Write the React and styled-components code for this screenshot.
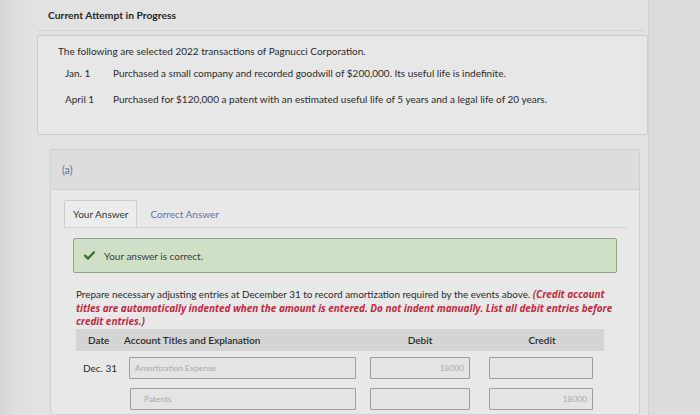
import React from "react";
import styled, { createGlobalStyle } from "styled-components";

const Global = createGlobalStyle`
  html, body { margin: 0; padding: 0; }
  body {
    background: #dcdcdc;
    font-family: Lato, "Open Sans", "Liberation Sans", sans-serif;
    overflow: hidden;
  }
`;

const Page = styled.div`
  width: 700px;
  height: 415px;
  display: flex;
  overflow: hidden;
  background: linear-gradient(90deg, #d6d6d6 0px, #dedede 14px, #e2e2e2 37px);
`;

const Sheet = styled.div`
  width: 611px;
  padding-left: 37px;
  display: flex;
  flex-direction: column;
`;

const Gutter = styled.div`
  flex: 1;
  background: #dcdcdc;
  border-left: 1px solid #d2d2d2;
`;

const Title = styled.div`
  padding: 9px 11px 9px;
  line-height: 12px;
  font-size: 10.3px;
  font-weight: 700;
  color: #262626;
  border-bottom: 1px solid #d3d3d3;
  margin-right: 3px;
`;

const InfoBox = styled.div`
  margin-top: 4px;
  height: 100px;
  box-sizing: border-box;
  border: 1px solid #cbcbcb;
  border-radius: 2px;
  background: #e7e7e7;
  padding: 9px 20px;
  font-size: 10px;
  line-height: 12px;
  color: #2a2a2a;
`;

const Lead = styled.div`
  margin-bottom: 10px;
`;

const TxRow = styled.div`
  display: flex;
  margin-left: 7px;
  margin-bottom: 14px;
`;

const TxDate = styled.span`
  width: 48px;
  flex-shrink: 0;
`;

const PartBox = styled.div`
  margin: 14px 8px 0 13px;
  border: 1px solid #d0d0d0;
  border-radius: 2px;
  background: #e8e8e8;
  flex: 1;
`;

const PartHead = styled.div`
  height: 39px;
  background: #dddddd;
  border-bottom: 1px solid #cfcfcf;
  display: flex;
  align-items: center;
  padding-left: 11px;
  font-size: 10.5px;
  color: #5a72a6;
`;

const PartBody = styled.div`
  padding: 10px 12px 0 12px;
`;

const Tabs = styled.div`
  display: flex;
  align-items: flex-end;
  gap: 4px;
  border-bottom: 1px solid #d2d2d2;
`;

const Tab = styled.div`
  height: 26px;
  display: flex;
  align-items: center;
  padding: 0 8px;
  font-size: 10px;
  color: ${(p) => (p.$active ? "#333" : "#5a74aa")};
  background: ${(p) => (p.$active ? "#ececec" : "transparent")};
  border: 1px solid ${(p) => (p.$active ? "#cdcdcd" : "transparent")};
  border-bottom: none;
  border-radius: 2px 2px 0 0;
  margin-left: ${(p) => (p.$active ? "1px" : "0")};
`;

const Success = styled.div`
  margin: 10px 10px 0 10px;
  height: 35px;
  box-sizing: border-box;
  border: 1px solid #8ea285;
  border-radius: 2px;
  background: #cfe0c6;
  display: flex;
  align-items: center;
  padding-left: 10px;
  gap: 9px;
  font-size: 10px;
  color: #3a3a3a;
`;

const Instructions = styled.p`
  margin: 15px 12px 0 13px;
  font-size: 9.9px;
  line-height: 13.5px;
  color: #2a2a2a;
`;

const Note = styled.span`
  font-family: "Open Sans", Lato, sans-serif;
  font-size: 10px;
  letter-spacing: -0.05px;
  color: #c42a40;
  font-weight: 700;
  font-style: italic;
`;

const Table = styled.div`
  margin: 0 23px 0 13px;
`;

const HeadRow = styled.div`
  display: grid;
  grid-template-columns: 48px 1fr 120px 124px;
  align-items: center;
  height: 22px;
  background: #d4d4d4;
  font-size: 10px;
  font-weight: 600;
  color: #2a2a2a;
`;

const HeadCell = styled.div`
  padding-left: ${(p) => (p.$pad ? "12px" : "0")};
  text-align: ${(p) => (p.$center ? "center" : "left")};
`;

const Row = styled.div`
  display: grid;
  grid-template-columns: 53px 227px 116px 118px;
  align-items: center;
  height: 22px;
  margin-top: ${(p) => p.$mt}px;
`;

const DateCell = styled.div`
  font-size: 10px;
  color: #2a2a2a;
  padding-left: 7px;
`;

const Field = styled.div`
  height: 22px;
  box-sizing: border-box;
  border: 1px solid #9e9e9e;
  border-radius: 1px;
  background: #e4e4e4;
  font-size: 8.4px;
  color: #a9a9a9;
  display: flex;
  align-items: center;
  justify-content: ${(p) => (p.$num ? "flex-end" : "flex-start")};
  padding: 0 ${(p) => (p.$num ? "5px" : "0")} 0 ${(p) => (p.$indent ? "13px" : "5px")};
  margin-left: ${(p) => p.$ml || 0}px;
  width: ${(p) => p.$w}px;
`;

function Check() {
  return (
    <svg width="11" height="9" viewBox="0 0 11 9">
      <path d="M1 4.6 L4 7.6 L10 1.2" fill="none" stroke="#3e6b33" strokeWidth="2.2" strokeLinecap="round" strokeLinejoin="round" />
    </svg>
  );
}

export default function App() {
  return (
    <>
      <Global />
      <Page>
        <Sheet>
          <Title>Current Attempt in Progress</Title>
          <InfoBox>
            <Lead>The following are selected 2022 transactions of Pagnucci Corporation.</Lead>
            <TxRow>
              <TxDate>Jan. 1</TxDate>
              <span>Purchased a small company and recorded goodwill of $200,000. Its useful life is indefinite.</span>
            </TxRow>
            <TxRow>
              <TxDate>April 1</TxDate>
              <span>Purchased for $120,000 a patent with an estimated useful life of 5 years and a legal life of 20 years.</span>
            </TxRow>
          </InfoBox>
          <PartBox>
            <PartHead>(a)</PartHead>
            <PartBody>
              <Tabs>
                <Tab $active>Your Answer</Tab>
                <Tab>Correct Answer</Tab>
              </Tabs>
              <Success>
                <Check />
                <span>Your answer is correct.</span>
              </Success>
              <Instructions>
                Prepare necessary adjusting entries at December 31 to record amortization required by the events above.{" "}
                <Note>
                  (Credit account titles are automatically indented when the amount is entered. Do not indent manually. List all debit entries before credit entries.)
                </Note>
              </Instructions>
              <Table>
                <HeadRow>
                  <HeadCell $pad>Date</HeadCell>
                  <HeadCell>Account Titles and Explanation</HeadCell>
                  <HeadCell $center>Debit</HeadCell>
                  <HeadCell $center>Credit</HeadCell>
                </HeadRow>
                <Row $mt={6}>
                  <DateCell>Dec. 31</DateCell>
                  <Field $w={227}>Amortization Expense</Field>
                  <Field $w={100} $ml={14} $num>18000</Field>
                  <Field $w={104} $ml={17} $num></Field>
                </Row>
                <Row $mt={9}>
                  <DateCell></DateCell>
                  <Field $w={226} $ml={1} $indent>Patents</Field>
                  <Field $w={100} $ml={14} $num></Field>
                  <Field $w={104} $ml={17} $num>18000</Field>
                </Row>
              </Table>
            </PartBody>
          </PartBox>
        </Sheet>
        <Gutter />
      </Page>
    </>
  );
}
